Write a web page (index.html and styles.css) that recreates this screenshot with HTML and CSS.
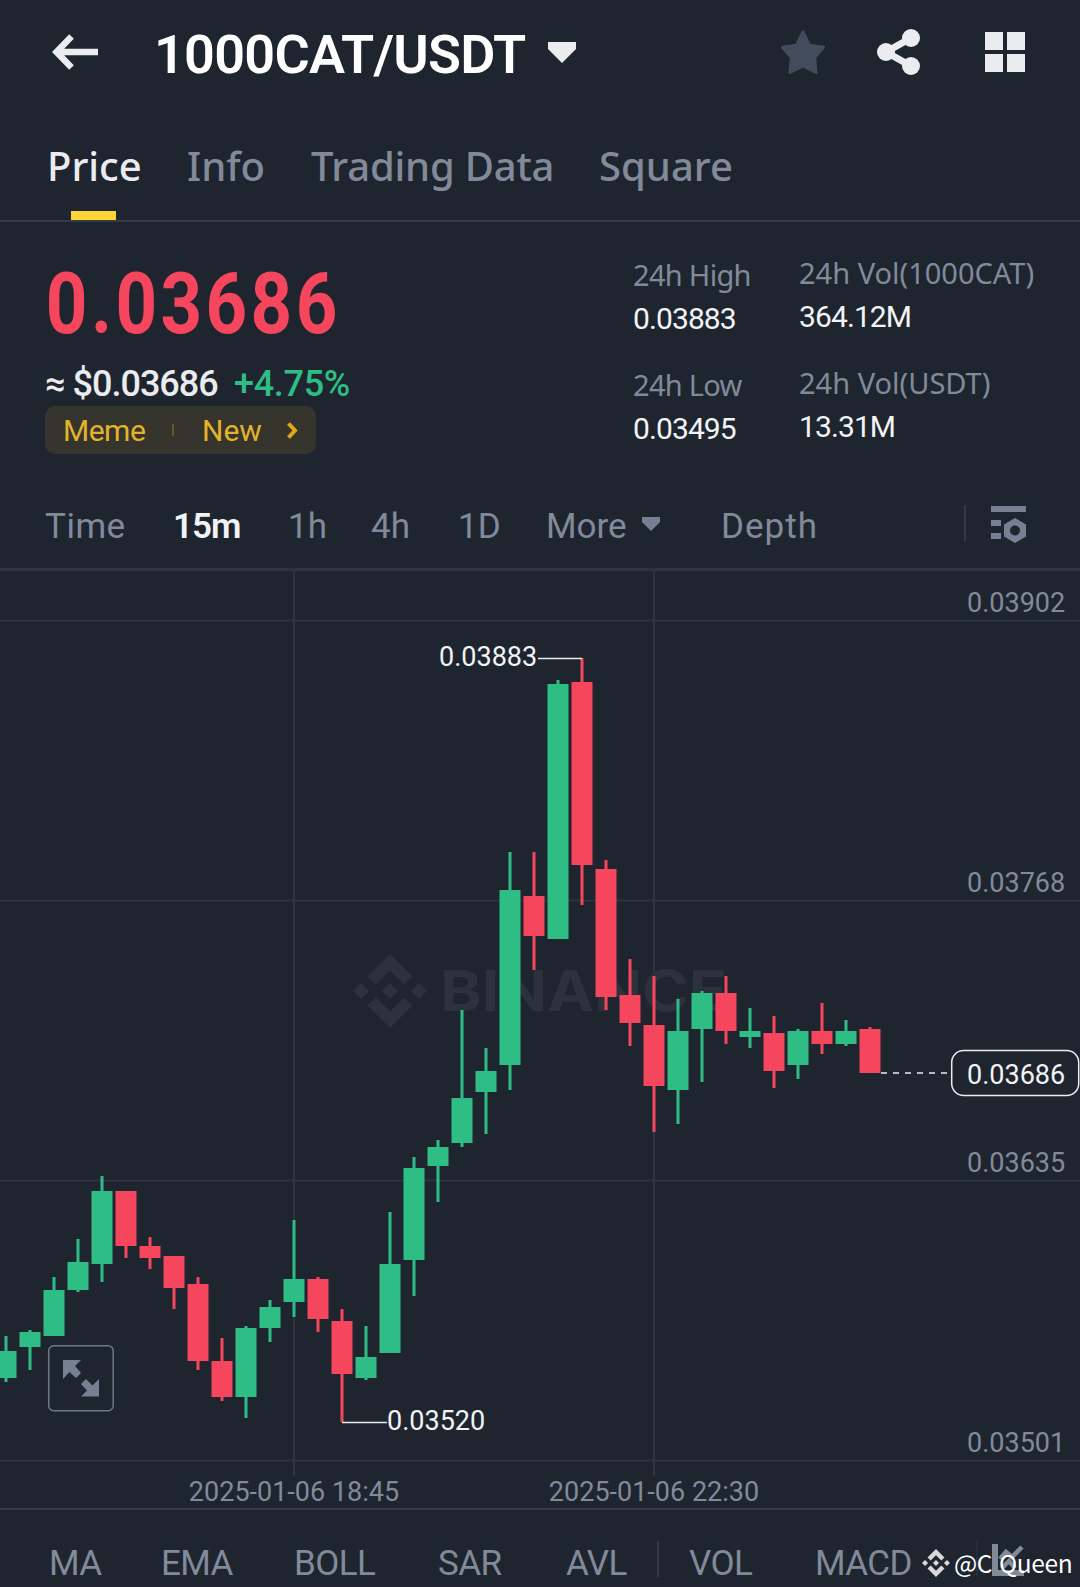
FILE: index.html
```html
<!DOCTYPE html>
<html>
<head>
<meta charset="UTF-8">
<title>1000CAT/USDT</title>
<link rel="stylesheet" href="styles.css">
</head>
<body>
	<header class="topbar">
		<svg class="back" viewBox="0 0 46 36" width="46" height="36">
			<path d="M46 18H5M19.5 2.5L4.500 18L19.500 33.500" fill="none" stroke="#eaecef" stroke-width="6.500"/>
		</svg>
		<h1 class="pair">1000CAT/USDT</h1>
		<svg class="pair-caret" viewBox="0 0 28 21" width="28" height="21">
			<path d="M0 0H28V7L14 21L0 7Z" fill="#eaecef"/>
		</svg>
		<svg class="star" viewBox="0 0 44 45" width="44" height="45">
			<path d="M22 2L28.500 15.200L42.500 17.200L33.700 27.500L35 42.500L22 36L9 42.500L10.300 27.500L1.500 17.200L15.500 15.200Z" fill="#434c5a" stroke="#434c5a" stroke-width="3" stroke-linejoin="round"/>
		</svg>
		<svg class="share" viewBox="0 0 43 46" width="43" height="46">
			<path d="M34 9L9 23L34 37" fill="none" stroke="#eaecef" stroke-width="7"/>
			<circle cx="9" cy="23" r="9" fill="#eaecef"/>
			<circle cx="34" cy="9" r="9" fill="#eaecef"/>
			<circle cx="34" cy="37" r="9" fill="#eaecef"/>
		</svg>
		<svg class="grid-icon" viewBox="0 0 40 40" width="40" height="40">
			<path d="M0 0H18V18H0ZM22 0H40V18H22ZM0 22H18V40H0ZM22 22H40V40H22Z" fill="#eaecef"/>
		</svg>
	</header>

	<nav class="tabs">
		<span class="tab active">Price</span>
		<span class="tab">Info</span>
		<span class="tab data">Trading Data</span>
		<span class="tab">Square</span>
	</nav>

	<section class="summary">
		<div class="quote">
			<div class="price">0.03686</div>
			<div class="sub"><span class="usd">≈ $0.03686</span><span class="change">+4.75%</span></div>
			<div class="tags">
				<span class="meme">Meme</span>
				<i class="tag-line"></i>
				<span class="new">New</span>
				<svg viewBox="0 0 11 17" width="11" height="17"><path d="M1.500 1.500L8 8.500L1.500 15.500" fill="none" stroke="#e0a812" stroke-width="4"/></svg>
			</div>
		</div>
		<dl class="stats range">
			<dt>24h High</dt>
			<dd>0.03883</dd>
			<dt>24h Low</dt>
			<dd>0.03495</dd>
		</dl>
		<dl class="stats vol">
			<dt>24h Vol(1000CAT)</dt>
			<dd>364.12M</dd>
			<dt>24h Vol(USDT)</dt>
			<dd>13.31M</dd>
		</dl>
	</section>

	<nav class="intervals">
		<span class="time">Time</span>
		<span class="active">15m</span>
		<span>1h</span>
		<span>4h</span>
		<span>1D</span>
		<span class="more">More
			<svg viewBox="0 0 18 14" width="18" height="14"><path d="M0 0H18V5L9 14L0 5Z" fill="#778092"/></svg>
		</span>
		<span class="depth">Depth</span>
		<i class="divider"></i>
		<svg class="settings" viewBox="0 0 36 37" width="36" height="37">
			<path d="M0 0H35V6H0ZM0 14H10V20H0ZM0 27H10V33H0Z" fill="#778092"/>
			<path d="M24 12L35 18.500V30.500L24 37L13 30.500V18.500Z" fill="#778092"/>
			<circle cx="24" cy="24.500" r="5" fill="#1e252f"/>
		</svg>
	</nav>

	<svg class="chart" viewBox="0 568 1080 940" width="1080" height="940">
		<g class="grid-lines">
			<path d="M0 569.500H1080" stroke-width="3"/>
			<path d="M0 620.500H1080M0 900.500H1080M0 1180.500H1080M0 1460.500H1080"/>
			<path d="M294 569V1476M654 569V1476"/>
		</g>
		<!-- logo behind the candles -->
		<g class="watermark">
			<path d="M390 954L412.500 976.500L404 984.500L390 970.500L376 984.500L367.500 976.500Z"/>
			<path d="M390 1028L412.500 1005.500L404 997.500L390 1011.500L376 997.500L367.500 1005.500Z"/>
			<path d="M390 983L398 991L390 999L382 991Z"/>
			<path d="M361 983L369 991L361 999L353 991Z"/>
			<path d="M419 983L427 991L419 999L411 991Z"/>
			<text x="440" y="1011" textLength="287" lengthAdjust="spacingAndGlyphs">BINANCE</text>
		</g>
		<g id="candles"></g>
		<g class="axis">
			<text x="967" y="612">0.03902</text>
			<text x="967" y="892">0.03768</text>
			<text x="967" y="1172">0.03635</text>
			<text x="967" y="1452">0.03501</text>
			<text class="date" x="294" y="1501">2025-01-06 18:45</text>
			<text class="date" x="654" y="1501">2025-01-06 22:30</text>
		</g>
		<g class="marks">
			<path d="M538 658.500H582M342 1422.500H387"/>
			<text x="439" y="666">0.03883</text>
			<text x="387" y="1430">0.03520</text>
			<path d="M881 1073H950" stroke-dasharray="6 6"/>
			<rect x="951.700" y="1050.500" width="127" height="45" rx="12"/>
			<text x="967" y="1084">0.03686</text>
		</g>
		<g class="expand">
			<rect x="48.700" y="1345.700" width="64.500" height="65" rx="5"/>
			<path d="M63 1360H81L75 1366L81 1373L76 1378L69.500 1372L63 1379Z"/>
			<path d="M99 1396.500H81L87 1390.500L81 1384L86 1379L92.500 1385.500L99 1379Z"/>
		</g>
	</svg>

	<nav class="indicators">
		<span>MA</span>
		<span>EMA</span>
		<span>BOLL</span>
		<span>SAR</span>
		<span>AVL</span>
		<i class="divider"></i>
		<span>VOL</span>
		<span>MACD</span>
		<i class="divider faint"></i>
		<svg viewBox="0 0 32 32" width="32" height="32">
			<path d="M0 0H6V26H32V32H0Z" fill="#828a9a"/>
			<path d="M8 15L14 8L20 13L30 3M10 24L17 17L23 24" fill="none" stroke="#828a9a" stroke-width="4.500"/>
		</svg>
	</nav>

	<div class="author">
		<svg viewBox="353 954 74 74" width="28" height="28">
			<path d="M390 954L412.500 976.500L404 984.500L390 970.500L376 984.500L367.500 976.500ZM390 1028L412.500 1005.500L404 997.500L390 1011.500L376 997.500L367.500 1005.500ZM390 983L398 991L390 999L382 991ZM361 983L369 991L361 999L353 991ZM419 983L427 991L419 999L411 991Z" fill="#d9d9d9"/>
		</svg>
		<span>@C Queen</span>
	</div>

	<script src="chart.js"></script>
</body>
</html>
```

FILE: styles.css
```css
* {
	box-sizing: border-box;
}
body {
	position: relative;
	width: 1080px;
	height: 1587px;
	margin: 0;
	overflow: hidden;
	background: #1e252f;
	color: #828a9a;
	font-family: Roboto, "Liberation Sans", sans-serif;
}
svg {
	display: block;
	flex: none;
}
span {
	white-space: nowrap;
}

/* top bar */
.topbar {
	display: flex;
	align-items: center;
	height: 104px;
	padding-left: 52px;
}
.pair {
	width: 392px;
	margin: 5px 0 0 56px;
	color: #fff;
	font-size: 54px;
	font-weight: 600;
	line-height: 64px;
	letter-spacing: -0.75px;
}
.pair-caret {
	margin-left: 2px;
}
.star {
	margin-left: 205px;
}
.share {
	margin-left: 52px;
}
.grid-icon {
	margin-left: 65px;
}

/* tabs */
.tabs {
	display: grid;
	grid-template-columns: 140px 124px 288px 200px;
	height: 118px;
	padding: 31px 0 0 47px;
	border-bottom: 2px solid #333a46;
	font-family: "Noto Sans", sans-serif;
	font-size: 40px;
	font-weight: 500;
	line-height: 62px;
}
.tab.data {
	letter-spacing: -0.2px;
}
.tab.active {
	position: relative;
	color: #eaecef;
}
.tab.active::after {
	content: "";
	position: absolute;
	left: 24px;
	bottom: 0;
	width: 45px;
	height: 9px;
	background: #fcd535;
}

/* price and 24h stats */
.summary {
	display: grid;
	grid-template-columns: 588px 166px 1fr;
	height: 246px;
	padding-left: 45px;
}
.price {
	margin-top: 39px;
	padding-left: 1px;
	color: #f6465d;
	font-size: 86px;
	font-weight: 700;
	line-height: 86px;
	letter-spacing: 4px;
	transform: scaleX(.845);
	transform-origin: 0 0;
}
.sub {
	display: flex;
	margin-top: 15px;
	font-size: 36px;
	font-weight: 500;
	line-height: 44px;
}
.usd {
	width: 189px;
	color: #eaecef;
	letter-spacing: -1px;
}
.change {
	color: #2ebd85;
	letter-spacing: -0.3px;
}
.tags {
	display: flex;
	align-items: center;
	width: 271px;
	height: 48px;
	padding-left: 18px;
	border-radius: 10px;
	background: #35342d;
	color: #e3b32c;
	font-size: 30px;
}
.meme {
	width: 109px;
	letter-spacing: -0.5px;
}
.tag-line {
	width: 2px;
	height: 12px;
	background: #665627;
}
.new {
	width: 85px;
	margin-left: 28px;
}
.stats {
	margin: 35px 0 0;
	line-height: 36px;
}
.stats.vol {
	margin-top: 33px;
}
.stats dt {
	font-family: "Noto Sans", sans-serif;
	font-size: 29px;
	white-space: nowrap;
}
.range dt {
	letter-spacing: -0.7px;
}
.stats dd {
	margin: 8px 0 30px;
	color: #f2f3f5;
	font-size: 30px;
	letter-spacing: -0.9px;
}

/* intervals */
.intervals {
	display: grid;
	grid-template-columns: 128px 115px 83px 87px 88px 175px 243px 27px 36px;
	height: 100px;
	padding: 17px 0 0 45px;
	font-size: 35px;
	line-height: 84px;
}
.intervals .active {
	color: #f2f3f5;
	font-weight: 600;
	letter-spacing: -1px;
}
.time {
	letter-spacing: .5px;
}
.depth {
	letter-spacing: 1px;
}
.more {
	display: flex;
	align-items: center;
	gap: 15px;
}
.more svg {
	margin-top: -7px;
}
.divider {
	width: 2px;
	height: 36px;
	background: #333a46;
}
.intervals .divider {
	margin-top: 20px;
}
.settings {
	margin-top: 21px;
}

/* chart */
.chart text {
	font-size: 27px;
}
.grid-lines {
	fill: none;
	stroke: #2e3541;
	stroke-width: 2;
}
.watermark {
	fill: #2c313c;
}
.chart .watermark text {
	font-family: Inter, sans-serif;
	font-size: 57px;
	font-weight: 700;
}
.up {
	fill: #2ebd85;
}
.down {
	fill: #f6465d;
}
.axis {
	fill: #828a9a;
}
.date {
	text-anchor: middle;
}
.marks text {
	fill: #f2f3f5;
}
.marks path {
	stroke: #eaecef;
	stroke-width: 1.7;
}
.marks rect {
	fill: #1e252f;
	stroke: #eaecef;
	stroke-width: 1.5;
}
.expand rect {
	fill: #1e252f;
	stroke: #6f7889;
	stroke-width: 1.5;
}
.expand path {
	fill: #778092;
}

/* indicators */
.indicators {
	display: grid;
	grid-template-columns: 112px 133px 144px 128px 91px 32px 126px 161px 16px 32px;
	height: 79px;
	padding: 30px 0 0 49px;
	border-top: 2px solid #333a46;
	font-size: 35px;
	line-height: 48px;
	letter-spacing: -0.6px;
}
.indicators .divider {
	margin-top: 1px;
}
.indicators .faint {
	opacity: .4;
}
.indicators svg {
	margin-top: 4px;
}

/* author stamp on top of the indicator row */
.author {
	position: absolute;
	left: 922px;
	top: 1546px;
	display: flex;
	align-items: center;
	gap: 4px;
	color: #fff;
	font-family: "Noto Sans CJK SC", sans-serif;
	font-size: 24.5px;
	font-weight: 400;
	line-height: 34px;
	letter-spacing: -0.4px;
	word-spacing: 2px;
}
```

FILE: chart.js
```js
// [wick top, body top, body bottom, wick bottom, is up]
const candles = [
	[1336,1351,1378,1382,1], [1330,1332,1347,1370,1], [1277,1290,1336,1336,1],
	[1239,1262,1290,1292,1], [1176,1191,1264,1282,1], [1191,1191,1246,1258,0],
	[1237,1246,1258,1269,0], [1256,1256,1288,1309,0], [1277,1284,1361,1370,0],
	[1338,1361,1397,1401,0], [1326,1328,1397,1418,1], [1300,1307,1328,1342,1],
	[1220,1279,1302,1317,1], [1277,1279,1319,1332,0], [1309,1321,1374,1422,0],
	[1326,1357,1378,1380,1], [1212,1264,1353,1353,1], [1157,1168,1260,1296,1],
	[1140,1147,1166,1202,1], [1010,1098,1143,1147,1], [1048,1071,1092,1134,1],
	[852,890,1065,1090,1], [852,896,936,970,0], [680,684,939,939,1],
	[658,682,865,905,0], [860,869,997,1010,0], [959,995,1023,1046,0],
	[976,1025,1086,1132,0], [999,1031,1090,1124,1], [991,993,1029,1082,1],
	[976,993,1031,1044,0], [1008,1031,1037,1048,1], [1016,1033,1071,1088,0],
	[1029,1031,1065,1079,1], [1003,1031,1044,1054,0], [1020,1031,1044,1046,1],
	[1027,1029,1073,1073,0]
];

function rect(x, y, w, h, cls){
	let r = document.createElementNS('http://www.w3.org/2000/svg', 'rect');
	r.setAttribute('x', x);
	r.setAttribute('y', y);
	r.setAttribute('width', w);
	r.setAttribute('height', h);
	r.setAttribute('class', cls);
	document.getElementById('candles').appendChild(r);
}

for(let i=0;i<candles.length;i++){
	let [high, top, bottom, low, up] = candles[i];
	let x = 6 + i*24;
	let cls = up ? 'up' : 'down';
	rect(x-1.5, high, 3, low-high, cls);
	rect(x-10.5, top, 21, bottom-top, cls);
}
```
